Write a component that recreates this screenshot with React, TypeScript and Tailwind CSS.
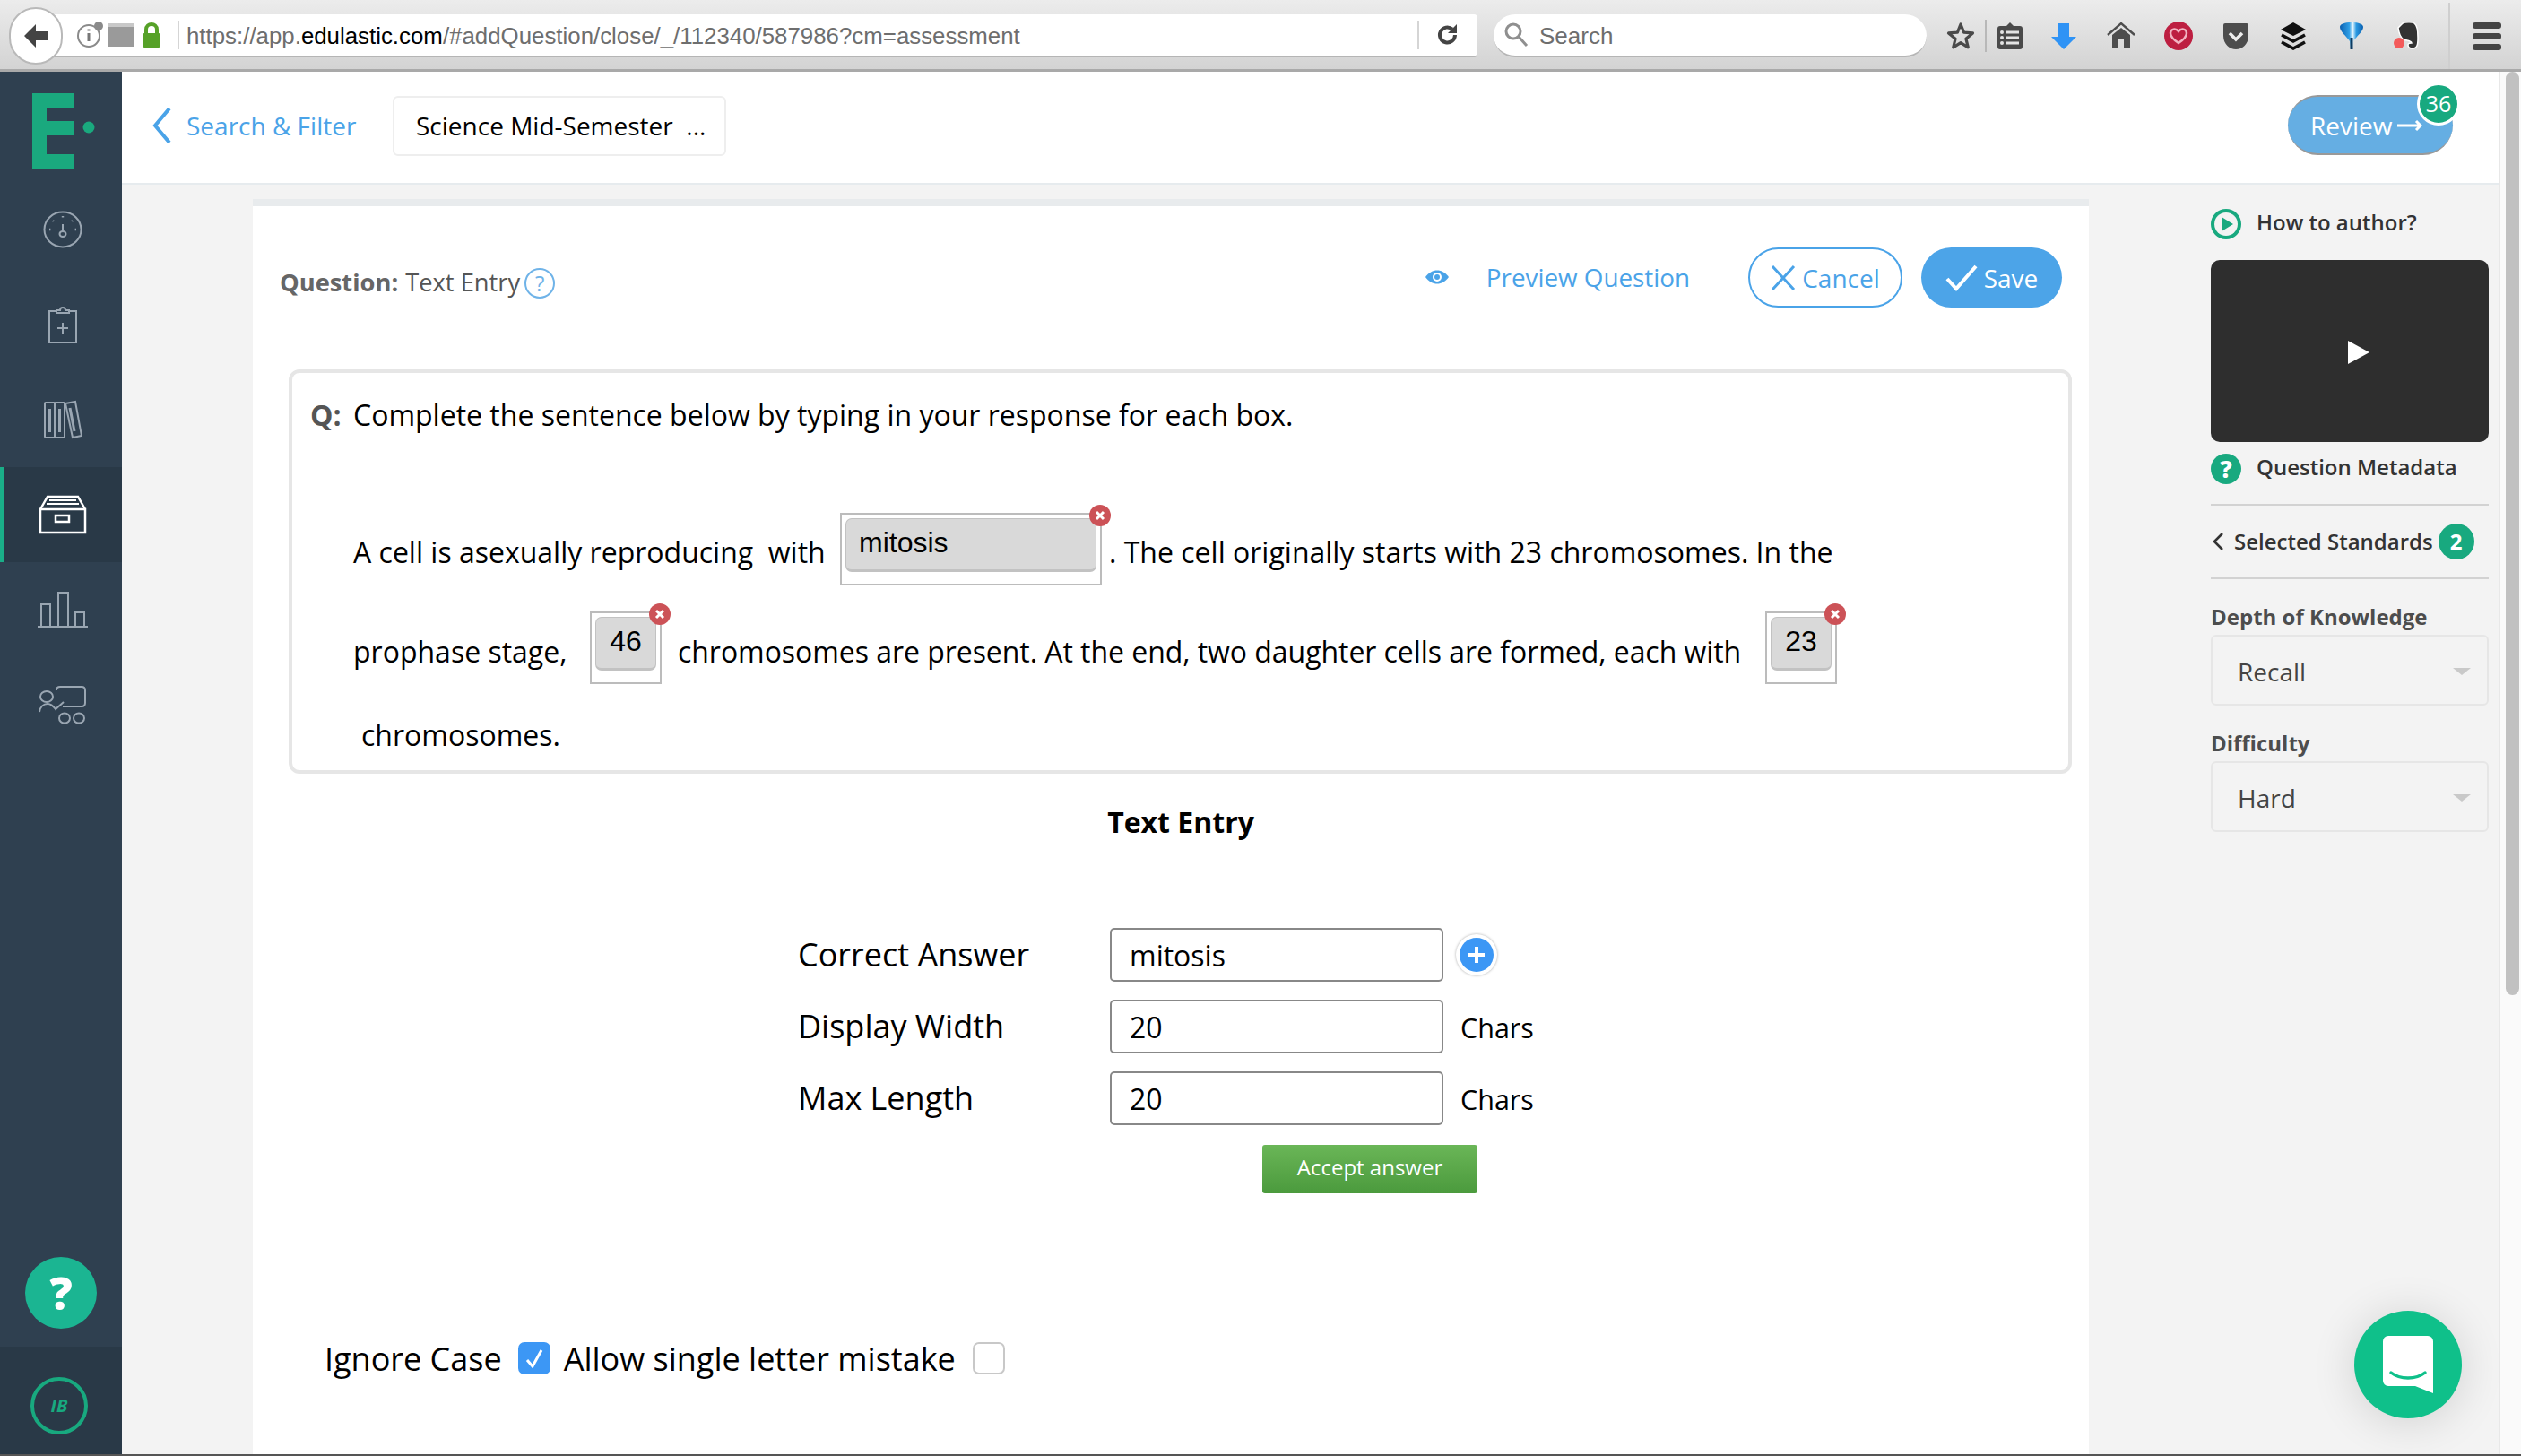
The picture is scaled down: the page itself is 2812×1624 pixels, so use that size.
import React from 'react';

const openSans = "font-['Open_Sans',sans-serif]";
const navStroke = '#9aa6b2';

const GaugeIcon = () => (
  <svg width="44" height="42" viewBox="0 0 44 42" fill="none" stroke={navStroke} strokeWidth="2">
    <ellipse cx="22" cy="21" rx="20.5" ry="19.5" />
    <ellipse cx="22" cy="26" rx="3.5" ry="3" />
    <path d="M22 23v-8" />
    <path d="M22 6v1.5M11 11l.8.8M33 11l-.8.8M7 21h1.4M35.6 21H37" strokeWidth="2.4" />
  </svg>
);

const ClipboardIcon = () => (
  <svg width="34" height="42" viewBox="0 0 34 42" fill="none" stroke={navStroke} strokeWidth="2">
    <path d="M10 6H2v35h30V6h-8" />
    <path d="M10 8V5h4c0-4 6-4 6 0h4v3z" />
    <path d="M17 19v12M11 25h12" />
  </svg>
);

const BooksIcon = () => (
  <svg width="44" height="44" viewBox="0 0 44 44" fill="none" stroke={navStroke} strokeWidth="2">
    <rect x="2" y="3" width="11" height="39" rx="1" />
    <rect x="13" y="3" width="11" height="39" rx="1" />
    <path d="M25 4l11-2 7 38-10 2z" />
    <path d="M7.5 10v26M18.5 10v26M30 9l5 26" strokeWidth="3" />
  </svg>
);

const ArchiveIcon = () => (
  <svg width="54" height="44" viewBox="0 0 54 44" fill="none" stroke="#fff" strokeWidth="2.5">
    <path d="M2 16h50v26H2z" />
    <path d="M2 16L10 2h34l8 14" />
    <path d="M9 10h36M12 6h30" strokeWidth="2" />
    <rect x="19" y="23" width="15" height="7" />
  </svg>
);

const ChartIcon = () => (
  <svg width="58" height="42" viewBox="0 0 58 42" fill="none" stroke={navStroke} strokeWidth="2">
    <path d="M1 40h56" />
    <path d="M5 40V15h10v25M24 40V2h11v38M43 40V24h10v16" />
  </svg>
);

const PeopleIcon = () => (
  <svg width="54" height="44" viewBox="0 0 54 44" fill="none" stroke={navStroke} strokeWidth="2">
    <ellipse cx="9" cy="13" rx="7" ry="6" />
    <path d="M1 30c1-6 5-9 9-9 3 0 6 2 9 6l9-8" />
    <path d="M20 6c0-3 1-4 4-4h24c3 0 4 1 4 4v14c0 3-1 4-4 4H27" />
    <ellipse cx="29" cy="37" rx="6" ry="5.5" />
    <ellipse cx="45" cy="37" rx="6" ry="5.5" />
  </svg>
);

const navItems = [
  { icon: <GaugeIcon /> },
  { icon: <ClipboardIcon /> },
  { icon: <BooksIcon /> },
  { icon: <ArchiveIcon />, active: true },
  { icon: <ChartIcon /> },
  { icon: <PeopleIcon /> },
];

const Sidebar = () => (
  <aside className="w-[136px] h-full shrink-0 bg-[#2f4050] flex flex-col">
    <div className="h-[123px] pl-[36px] pt-[24px] shrink-0">
      <svg width="70" height="84" viewBox="0 0 70 84">
        <path d="M0 0h46v16H16v15h30v16H16v21h30v16H0z" fill="#1aa97e" />
        <circle cx="63" cy="38" r="6.5" fill="#1aa97e" />
      </svg>
    </div>
    {navItems.map((item, i) => (
      <div
        key={i}
        className={
          item.active
            ? 'h-[106px] flex items-center justify-center bg-[#293947] border-l-4 border-[#1aae88]'
            : 'h-[106px] flex items-center justify-center pl-[4px]'
        }
      >
        {item.icon}
      </div>
    ))}
    <div className="flex-1 flex items-end pl-[28px] pb-[20px]">
      <div className={`w-[80px] h-[80px] rounded-full bg-[#1bb592] flex items-center justify-center text-white text-[50px] font-extrabold ${openSans}`}>
        ?
      </div>
    </div>
    <div className="h-[120px] bg-[#293947] shrink-0 pl-[34px] pt-[34px]">
      <div className={`w-[64px] h-[64px] rounded-full border-4 border-[#18a97f] flex items-center justify-center text-[#18a97f] text-[20px] font-bold italic ${openSans}`}>
        IB
      </div>
    </div>
  </aside>
);

const ToolIcon = ({ children, className }: { children: React.ReactNode; className: string }) => (
  <svg width="32" height="32" viewBox="0 0 32 32" className={`shrink-0 ${className}`}>
    {children}
  </svg>
);

const BrowserBar = () => (
  <div className="h-[80px] shrink-0 relative flex items-center pt-[3px] bg-gradient-to-b from-[#ececec] to-[#d3d3d3] border-b-[3px] border-[#a9a9a9] font-['Liberation_Sans',sans-serif]">
    <div className="ml-[30px] w-[1618px] h-[48px] bg-white border-b-2 border-[#b5b5b5] rounded-r-[4px] flex items-center pl-[56px]">
      <svg width="30" height="30" viewBox="0 0 30 30" fill="none" className="shrink-0">
        <circle cx="13" cy="16" r="12" stroke="#8a8a8a" strokeWidth="2" />
        <circle cx="24" cy="5" r="5" fill="#8a8a8a" />
        <path d="M13 13v9M13 8.5v2" stroke="#777" strokeWidth="3" />
      </svg>
      <div className="ml-[5px] w-[28px] h-[26px] bg-[#9a9a9a] shrink-0 border-t-4 border-[#c8c8c8]" />
      <svg width="22" height="28" viewBox="0 0 22 28" className="ml-[9px] shrink-0">
        <path d="M5 12V8c0-8 12-8 12 0v4" fill="none" stroke="#56a128" strokeWidth="4" />
        <rect x="1" y="12" width="20" height="16" rx="2" fill="#56a128" />
      </svg>
      <div className="ml-[18px] w-[2px] h-[32px] bg-[#d5d5d5] shrink-0" />
      <div className="ml-[8px] pt-[2px] text-[25.85px] leading-[32px] text-[#6e6e6e] whitespace-nowrap w-[1150px]">
        https://app.<span className="text-black">edulastic.com</span>/#addQuestion/close/_/112340/587986?cm=assessment
      </div>
      <div className="ml-[223px] w-[2px] h-[32px] bg-[#d5d5d5] shrink-0" />
      <svg width="26" height="26" viewBox="0 0 26 26" fill="none" className="ml-[19px] shrink-0">
        <path d="M21 13a8.5 8.5 0 1 1-3-6.5" stroke="#444" strokeWidth="4" />
        <path d="M23 1v10H13z" fill="#444" />
      </svg>
    </div>
    <div className="absolute left-[10px] top-[8px] w-[60px] h-[64px] rounded-full bg-white border-2 border-[#b9b9b9] flex items-center justify-center">
      <svg width="30" height="30" viewBox="0 0 30 30">
        <path d="M15 2L2 15l13 13v-8h13v-10H15z" fill="#444" />
      </svg>
    </div>
    <div className="ml-[18px] w-[483px] h-[48px] bg-white border-b-2 border-[#b5b5b5] rounded-full flex items-center pl-[10px]">
      <svg width="30" height="30" viewBox="0 0 30 30" fill="none" stroke="#8f8f8f" strokeWidth="3">
        <circle cx="12" cy="11" r="8" />
        <path d="M18 17l9 10" />
      </svg>
      <span className="ml-[11px] text-[26px] pt-[2px] text-[#6e6e6e]">Search</span>
    </div>
    <ToolIcon className="ml-[22px]">
      <path d="M16 3l3.6 9.2 9.9.7-7.6 6.3 2.4 9.6L16 23.6 7.7 28.8l2.4-9.6L2.5 12.9l9.9-.7z" fill="none" stroke="#4a4a4a" strokeWidth="3.2" strokeLinejoin="round" />
    </ToolIcon>
    <div className="ml-[11px] w-[2px] h-[36px] bg-[#b8b8b8] shrink-0" />
    <ToolIcon className="ml-[10px]">
      <path d="M12 5l4-4 4 4h7a3 3 0 0 1 3 3v20a3 3 0 0 1-3 3H5a3 3 0 0 1-3-3V8a3 3 0 0 1 3-3z" fill="#4a4a4a" />
      <path d="M12 12h14M12 18h14M12 24h14" stroke="#e4e4e4" strokeWidth="3" />
      <circle cx="7" cy="12" r="2" fill="#e4e4e4" />
      <circle cx="7" cy="18" r="2" fill="#e4e4e4" />
      <circle cx="7" cy="24" r="2" fill="#e4e4e4" />
    </ToolIcon>
    <ToolIcon className="ml-[28px]">
      <path d="M10 2h12v15h8L16 31 2 17h8z" fill="#2f93f5" />
    </ToolIcon>
    <ToolIcon className="ml-[32px]">
      <path d="M1 15L16 2l15 13" fill="none" stroke="#4d4d4d" strokeWidth="2.4" />
      <path d="M16 7L6 15v15h7V20h6v10h7V15z" fill="#4d4d4d" />
    </ToolIcon>
    <ToolIcon className="ml-[32px]">
      <circle cx="16" cy="16" r="16" fill="#bd1f41" />
      <path d="M16 24c-6-4-9-7-9-11 0-5 6-6 9-2 3-4 9-3 9 2 0 4-3 7-9 11z" fill="none" stroke="#f2b4c2" strokeWidth="2.5" />
    </ToolIcon>
    <ToolIcon className="ml-[32px]">
      <path d="M2 4a2 2 0 0 1 2-2h24a2 2 0 0 1 2 2v12c0 9-7 15-14 15S2 25 2 16z" fill="#4d4d4d" />
      <path d="M9 13l7 7 7-7" fill="none" stroke="#eee" strokeWidth="3.6" />
    </ToolIcon>
    <ToolIcon className="ml-[32px]">
      <path d="M16 1l14 8-14 7L2 9z" fill="#111" />
      <path d="M3 15l13 7 13-7M3 23l13 7 13-7" fill="none" stroke="#111" strokeWidth="3.6" />
    </ToolIcon>
    <ToolIcon className="ml-[33px]">
      <defs>
        <linearGradient id="pinFill" x1="0" y1="0" x2="1" y2="0">
          <stop offset="0" stopColor="#0a5fb0" />
          <stop offset="0.4" stopColor="#2f9fe6" />
          <stop offset="0.55" stopColor="#e8f8ff" />
          <stop offset="0.7" stopColor="#2a9ae2" />
          <stop offset="1" stopColor="#0a5fb0" />
        </linearGradient>
      </defs>
      <path d="M3 6c0-3 5-5 13-5s13 2 13 5c0 5-7 10-11 16l-1 8h-2l-1-8C10 16 3 11 3 6z" fill="url(#pinFill)" />
      <path d="M16 31V18" stroke="#0c3a60" strokeWidth="3" />
    </ToolIcon>
    <ToolIcon className="ml-[30px]">
      <path d="M6 7l5-5c2-1 10-2 13 0 3 2 4 10 4 16 0 6 0 12-6 12-4 0-5-2-5-4s4-2 4-2c0-3-7-3-9-4-3-2-5-5-6-13z" fill="#333" stroke="#fff" strokeWidth="1.5" />
      <circle cx="7" cy="24" r="6" fill="#f35a5a" />
    </ToolIcon>
    <div className="ml-[30px] w-[2px] h-[74px] bg-[#cfcfcf] shrink-0" />
    <div className="ml-[25px] w-[32px] flex flex-col gap-[5px]">
      <div className="h-[7px] rounded-[3px] bg-[#444]" />
      <div className="h-[7px] rounded-[3px] bg-[#444]" />
      <div className="h-[7px] rounded-[3px] bg-[#444]" />
    </div>
  </div>
);

const TopBar = () => (
  <header className={`h-[126px] shrink-0 bg-white border-b-2 border-[#e6ebee] flex items-center pb-[4px] relative ${openSans}`}>
    <svg width="22" height="40" viewBox="0 0 22 40" fill="none" stroke="#4aa3e8" strokeWidth="4" className="ml-[34px]">
      <path d="M19 1L3 20l16 19" />
    </svg>
    <span className="ml-[16px] text-[#4aa3e8] text-[28px] whitespace-nowrap w-[230px]">Search &amp; Filter</span>
    <div className="w-[372px] h-[67px] rounded-[6px] border-2 border-[#eeeeee] flex items-center pl-[24px] text-black text-[28px] whitespace-pre">
      Science Mid-Semester  ...
    </div>
    <div className="absolute left-[2416px] top-[26px] w-[184px] h-[67px] rounded-full bg-[#65aee3] border-t-2 border-b-2 border-[#999] flex items-center pl-[25px] text-white text-[28px]">
      Review
      <svg width="28" height="14" viewBox="0 0 28 14" className="ml-[6px]" fill="none" stroke="#fff" strokeWidth="3">
        <path d="M0 7h26M21 2l5 5-5 5" />
      </svg>
    </div>
    <div className="absolute left-[2560px] top-[12px] w-[48px] h-[48px] rounded-full bg-[#18a97f] border-[3px] border-white flex items-center justify-center text-white text-[25px]">
      36
    </div>
  </header>
);

const RemoveBadge = () => (
  <div className="absolute right-[-12px] top-[-11px] w-[24px] h-[24px] rounded-full bg-[#cc5257] flex items-center justify-center">
    <svg width="12" height="12" viewBox="0 0 12 12" stroke="#fff" strokeWidth="3">
      <path d="M2 2l8 8M10 2l-8 8" />
    </svg>
  </div>
);

const BlankBox = ({ value, wide }: { value: string; wide?: boolean }) => (
  <div className={wide ? 'relative shrink-0 w-[292px] h-[81px] border-2 border-[#bcbcbc] p-[4px] pb-[13px]' : 'relative shrink-0 w-[80px] h-[81px] border-2 border-[#bcbcbc] p-[4px] pb-[13px]'}>
    <div
      className={
        wide
          ? "h-full rounded-[7px] bg-[#d9d9d9] border border-[#c2c2c2] border-b-[3px] pl-[14px] pt-[8px] text-[32px] leading-[36px] text-black font-['Liberation_Sans',sans-serif]"
          : "h-full rounded-[7px] bg-[#d9d9d9] border border-[#c2c2c2] border-b-[3px] text-center pt-[8px] text-[32px] leading-[36px] text-black font-['Liberation_Sans',sans-serif]"
      }
    >
      {value}
    </div>
    <RemoveBadge />
  </div>
);

const QuestionBox = () => (
  <div className="mt-[69px] ml-[40px] w-[1989px] h-[451px] rounded-[12px] border-4 border-[#e6e6e6] text-[32px] text-black">
    <div className="mt-[27px] pl-[20px] h-[40px] leading-[40px] flex whitespace-nowrap">
      <span className="w-[48px] font-bold text-[#555]">Q:</span>
      <span>Complete the sentence below by typing in your response for each box.</span>
    </div>
    <div className="mt-[89px] pl-[68px] h-[81px] flex whitespace-pre">
      <span className="w-[543px] pt-[24px] leading-[40px]">A cell is asexually reproducing  with </span>
      <BlankBox value="mitosis" wide />
      <span className="ml-[8px] pt-[24px] leading-[40px]">. The cell originally starts with 23 chromosomes. In the</span>
    </div>
    <div className="mt-[29px] pl-[68px] h-[81px] flex whitespace-pre">
      <span className="w-[264px] pt-[25px] leading-[40px]">prophase stage,</span>
      <BlankBox value="46" />
      <span className="ml-[18px] w-[1213px] pt-[25px] leading-[40px] tracking-[-0.05px]">chromosomes are present. At the end, two daughter cells are formed, each with</span>
      <BlankBox value="23" />
    </div>
    <div className="mt-[37px] pl-[77px] h-[40px] leading-[40px]">chromosomes.</div>
  </div>
);

const Field = ({ label, value, suffix }: { label: string; value: string; suffix: React.ReactNode }) => (
  <div className="flex items-center h-[60px] text-black">
    <span className="w-[348px] text-[36px]">{label}</span>
    <div className="w-[372px] h-[60px] rounded-[5px] border-2 border-[#888] pl-[20px] pt-[2px] flex items-center text-[32px]">{value}</div>
    {suffix}
  </div>
);

const Chars = () => <span className="ml-[19px] text-[30.5px] pt-[4px]">Chars</span>;

const QuestionCard = () => (
  <section className="mt-[16px] w-[2048px] h-[1400px] shrink-0 bg-white border-t-[8px] border-[#e8ebed]">
    <div className="mt-[46px] h-[67px] flex items-center pr-[30px]">
      <div className="ml-[30px] pt-[12px] flex items-center text-[27.3px] text-[#555] whitespace-nowrap">
        <span className="font-bold text-[#666]">Question:</span>
        <span className="ml-[8px]">Text Entry</span>
        <span className="ml-[5px] w-[34px] h-[34px] rounded-full border-2 border-[#6fb3e8] text-[#6fb3e8] text-[24px] leading-[30px] text-center">?</span>
      </div>
      <svg width="28" height="18" viewBox="0 0 28 18" className="ml-auto mb-[2px]">
        <path d="M1 9c7-10 19-10 26 0-7 10-19 10-26 0z" fill="#4aa3e8" />
        <circle cx="14" cy="9" r="5" fill="#fff" />
        <circle cx="14" cy="9" r="3" fill="#4aa3e8" />
      </svg>
      <span className="ml-[41px] text-[27.8px] text-[#4aa3e8] whitespace-nowrap">Preview Question</span>
      <div className="ml-[65px] w-[172px] h-[67px] rounded-full border-2 border-[#4aa3e8] flex items-center justify-center text-[28px] text-[#4aa3e8]">
        <svg width="28" height="30" viewBox="0 0 28 30" stroke="#4aa3e8" strokeWidth="3" className="mr-[7px]">
          <path d="M2 2l24 26M26 2L2 28" />
        </svg>
        Cancel
      </div>
      <div className="ml-[21px] w-[157px] h-[67px] rounded-full bg-[#4ca4e8] flex items-center justify-center text-[28px] text-white">
        <svg width="36" height="30" viewBox="0 0 36 30" fill="none" stroke="#fff" strokeWidth="4" className="mr-[7px]">
          <path d="M2 16l10 11L34 2" />
        </svg>
        Save
      </div>
    </div>
    <QuestionBox />
    <div className="mt-[32px] h-[44px] pl-[22px] text-center text-[32px] leading-[44px] font-bold text-black">Text Entry</div>
    <div className="mt-[96px] ml-[608px] flex flex-col gap-[20px]">
      <Field
        label="Correct Answer"
        value="mitosis"
        suffix={
          <div className="ml-[14px] w-[46px] h-[46px] rounded-full bg-white shadow-[0_0_3px_#aaa] flex items-center justify-center">
            <div className="w-[38px] h-[38px] rounded-full bg-[#3c97f5] flex items-center justify-center">
              <svg width="22" height="22" viewBox="0 0 22 22" stroke="#fff" strokeWidth="4">
                <path d="M11 2v18M2 11h18" />
              </svg>
            </div>
          </div>
        }
      />
      <Field label="Display Width" value="20" suffix={<Chars />} />
      <Field label="Max Length" value="20" suffix={<Chars />} />
    </div>
    <div className="mt-[22px] ml-[1126px] w-[240px] h-[54px] rounded-[3px] bg-gradient-to-b from-[#6ab657] to-[#4b9a3d] flex items-center justify-center pb-[5px] text-white text-[24px]">
      Accept answer
    </div>
    <div className="mt-[166px] ml-[80px] h-[36px] flex items-center text-[36px] text-black whitespace-nowrap">
      <span className="pt-[2px]">Ignore Case</span>
      <div className="ml-[18px] w-[36px] h-[36px] rounded-[7px] bg-[#3c97f5] flex items-center justify-center">
        <svg width="22" height="24" viewBox="0 0 22 24" fill="none" stroke="#fff" strokeWidth="3">
          <path d="M3 14l6 7L19 3" />
        </svg>
      </div>
      <span className="ml-[15px] pt-[2px]">Allow single letter mistake</span>
      <div className="ml-[19px] w-[36px] h-[36px] rounded-[7px] bg-white border-2 border-[#c8c8c8]" />
    </div>
  </section>
);

const StatusIcon = ({ children }: { children: React.ReactNode }) => (
  <div className="w-[34px] h-[34px] shrink-0 rounded-full bg-[#18a97f] flex items-center justify-center">{children}</div>
);

const SelectBox = ({ value }: { value: string }) => (
  <div className="mt-[4px] h-[79px] rounded-[6px] border-2 border-[#e6e6e6] flex items-center pl-[28px] pr-[18px] pt-[2px] text-[28px] text-[#444]">
    {value}
    <div className="ml-auto w-0 h-0 border-l-[10px] border-r-[10px] border-t-[8px] border-l-transparent border-r-transparent border-t-[#c9c9c9]" />
  </div>
);

const RightPanel = () => (
  <aside className={`ml-[136px] w-[310px] shrink-0 pt-[27px] ${openSans} text-[#333]`}>
    <div className="h-[34px] flex items-center">
      <StatusIcon>
        <div className="w-[26px] h-[26px] rounded-full bg-[#f3f3f3] flex items-center justify-center pl-[3px]">
          <div className="w-0 h-0 border-t-[8px] border-b-[8px] border-l-[13px] border-t-transparent border-b-transparent border-l-[#18a97f]" />
        </div>
      </StatusIcon>
      <span className="ml-[17px] mb-[5px] text-[24px] font-semibold whitespace-nowrap">How to author?</span>
    </div>
    <div className="mt-[23px] h-[203px] rounded-[10px] bg-[#2e2e2e] flex items-center justify-center pl-[20px] pt-[2px]">
      <div className="w-0 h-0 border-t-[13px] border-b-[13px] border-l-[24px] border-t-transparent border-b-transparent border-l-white" />
    </div>
    <div className="mt-[13px] h-[34px] flex items-center">
      <StatusIcon>
        <span className="text-white text-[26px] font-extrabold">?</span>
      </StatusIcon>
      <span className="ml-[17px] mb-[4px] text-[24px] font-semibold whitespace-nowrap">Question Metadata</span>
    </div>
    <div className="mt-[22px] h-[84px] border-y-2 border-[#d2d2d2] flex items-center">
      <svg width="14" height="22" viewBox="0 0 14 22" fill="none" stroke="#333" strokeWidth="2.6" className="ml-[1px]">
        <path d="M12 2L3 11l9 9" />
      </svg>
      <span className="ml-[11px] text-[24px] font-semibold whitespace-nowrap">Selected Standards</span>
      <span className="ml-[6px] w-[40px] h-[40px] rounded-full bg-[#18a97f] text-white text-[24px] font-bold flex items-center justify-center">2</span>
    </div>
    <div className="mt-[26px] h-[32px] leading-[32px] text-[24px] font-bold text-[#4d4d4d]">Depth of Knowledge</div>
    <SelectBox value="Recall" />
    <div className="mt-[26px] h-[32px] leading-[32px] text-[24px] font-bold text-[#4d4d4d]">Difficulty</div>
    <SelectBox value="Hard" />
  </aside>
);

const ChatBubble = () => (
  <div className="absolute left-[2490px] top-[1382px] w-[120px] h-[120px] rounded-full bg-[#0fc08a] shadow-[0_4px_50px_rgba(0,0,0,0.14)] flex items-center justify-center">
    <svg width="56" height="64" viewBox="0 0 56 64">
      <path d="M6 0h44a6 6 0 0 1 6 6v58l-20-8H6a6 6 0 0 1-6-6V6a6 6 0 0 1 6-6z" fill="#fff" />
      <path d="M9 41c10 8 28 8 38 0" fill="none" stroke="#0fc08a" strokeWidth="3.5" strokeLinecap="round" />
    </svg>
  </div>
);

export default function App() {
  return (
    <div className={`w-[2812px] h-[1624px] overflow-hidden flex flex-col bg-white ${openSans}`}>
      <BrowserBar />
      <div className="flex h-[1542px] shrink-0">
        <Sidebar />
        <div className="flex-1 flex flex-col relative">
          <TopBar />
          <main className="flex-1 flex bg-[#f3f3f3] pl-[146px] overflow-hidden">
            <QuestionCard />
            <RightPanel />
          </main>
          <ChatBubble />
        </div>
        <div className="w-[25px] shrink-0 bg-[#fafafa] border-l-2 border-[#e8e8e8] pl-[6px] pr-[2px]">
          <div className="h-[1030px] rounded-full bg-[#c1c1c1]" />
        </div>
      </div>
      <div className="flex-1 bg-[#555]" />
    </div>
  );
}
